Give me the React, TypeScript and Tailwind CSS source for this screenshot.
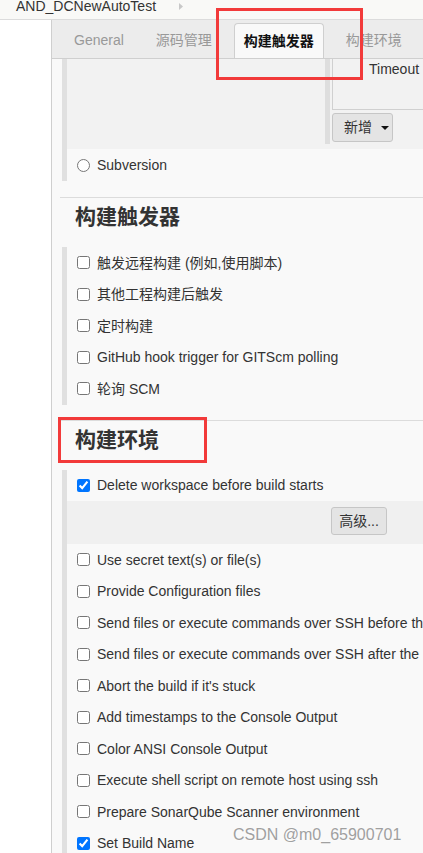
const font = { fontFamily: '"Liberation Sans", "Noto Sans CJK SC", sans-serif' };

function Check({ label, checked = false }: { label: string; checked?: boolean }) {
  return (
    <div className="flex h-[31.5px] items-center gap-[7px] pl-[10px] whitespace-nowrap">
      <input type="checkbox" defaultChecked={checked} className="h-[13px] w-[13px] shrink-0" />
      <span className="text-[14px] leading-[16px] text-[#333]">{label}</span>
    </div>
  );
}

function Heading({ title }: { title: string }) {
  return (
    <div className="ml-[8px] border-t border-[#dcdcdc] pl-[15px] pt-[4px] pb-[15px]">
      <div className="text-[21px] font-bold leading-[30px] text-[#333]">{title}</div>
    </div>
  );
}

export default function App() {
  const triggers = ['触发远程构建 (例如,使用脚本)', '其他工程构建后触发', '定时构建', 'GitHub hook trigger for GITScm polling', '轮询 SCM'];
  const env = [
    'Use secret text(s) or file(s)',
    'Provide Configuration files',
    'Send files or execute commands over SSH before the build starts',
    'Send files or execute commands over SSH after the build runs',
    "Abort the build if it's stuck",
    'Add timestamps to the Console Output',
    'Color ANSI Console Output',
    'Execute shell script on remote host using ssh',
    'Prepare SonarQube Scanner environment',
  ];

  return (
    <div className="relative h-[853px] w-[423px] overflow-hidden bg-white" style={font}>
      {/* breadcrumb */}
      <div className="flex h-[20px] items-start border-b border-[#dcdcdc] bg-[#f9f9f7] pl-[16px]">
        <span className="text-[14px] leading-[13px] text-[#333]">AND_DCNewAutoTest</span>
        <svg className="ml-[23px] mt-[3px]" width="4" height="7" viewBox="0 0 4 7">
          <path d="M0 0 L4 3.5 L0 7 Z" fill="#c8c8c8" />
        </svg>
      </div>

      <div className="flex h-[833px]">
        <div className="w-[52px] shrink-0 border-r border-[#cfcfcf] bg-white" />
        <div className="min-w-0 flex-1 bg-[#f9f9f9]">
          {/* tabs */}
          <div className="flex h-[39px] items-end gap-[12px] border-b border-[#cfcfcf] bg-[#ececec] pl-[12px] whitespace-nowrap">
            <div className="flex h-[35px] items-center px-[10px] text-[14px] text-[#999]">General</div>
            <div className="flex h-[35px] items-center px-[10px] text-[14px] text-[#999]">源码管理</div>
            <div className="flex h-[35px] items-center rounded-t-[4px] border border-b-0 border-[#cfcfcf] bg-[#f9f9f9] px-[9px] text-[14px] font-bold text-[#111]">构建触发器</div>
            <div className="flex h-[35px] items-center px-[10px] text-[14px] text-[#999]">构建环境</div>
          </div>

          {/* scm tail */}
          <div className="ml-[10px] border-l-[5px] border-[#e0e0e0]">
            <div className="flex h-[90px] bg-[#f2f2f2]">
              <div className="w-[258px] shrink-0" />
              <div className="h-[85px] w-[5px] shrink-0 bg-[#dedede]" />
              <div className="ml-[2px] flex-1">
                <div className="h-[51px] border-b border-l border-[#d0d0d0] pl-[36px] whitespace-nowrap">
                  <span className="block text-[14px] leading-[16px] pt-[2px] text-[#333]">Timeout (minutes)</span>
                </div>
                <button className="mt-[3px] flex h-[29px] w-[61px] items-center gap-[9px] rounded-[3px] border border-[#c6c6c6] bg-[#e4e4e4] pl-[11px] text-[14px] text-[#333]">
                  新增
                  <svg width="8" height="4" viewBox="0 0 8 4">
                    <path d="M0 0 L8 0 L4 4 Z" fill="#111" />
                  </svg>
                </button>
              </div>
            </div>
            <div className="flex h-[32px] items-center gap-[7px] pl-[10px]">
              <input type="radio" name="scm" className="h-[13px] w-[13px]" />
              <span className="text-[14px] text-[#333]">Subversion</span>
            </div>
          </div>

          <div className="h-[16px]" />
          <Heading title="构建触发器" />
          <div className="ml-[10px] border-l-[5px] border-[#e0e0e0]">
            {triggers.map((t) => (
              <Check key={t} label={t} />
            ))}
          </div>

          <div className="h-[15px]" />
          <Heading title="构建环境" />
          <div className="ml-[10px] border-l-[5px] border-[#e0e0e0]">
            <Check label="Delete workspace before build starts" checked />
            <div className="h-[43px] bg-[#f0f0f0] pl-[264px] pt-[6px]">
              <button className="h-[28px] w-[56px] rounded-[3px] border border-[#c6c6c6] bg-[#e4e4e4] text-[14px] text-[#333]">高级...</button>
            </div>
            {env.map((t) => (
              <Check key={t} label={t} />
            ))}
            <Check label="Set Build Name" checked />
          </div>
        </div>
      </div>

      {/* annotation boxes */}
      <div className="absolute left-[216px] top-[8px] h-[72px] w-[147px] border-[3px] border-[#f23a3a]" />
      <div className="absolute left-[58px] top-[417px] h-[46px] w-[149px] border-[3px] border-[#f23a3a]" />

      {/* watermark */}
      <div className="absolute left-[233px] top-[825px] text-[16px] leading-[20px] text-[#a0a0a0] [text-shadow:0_0_2px_#fff]">CSDN @m0_65900701</div>
    </div>
  );
}
